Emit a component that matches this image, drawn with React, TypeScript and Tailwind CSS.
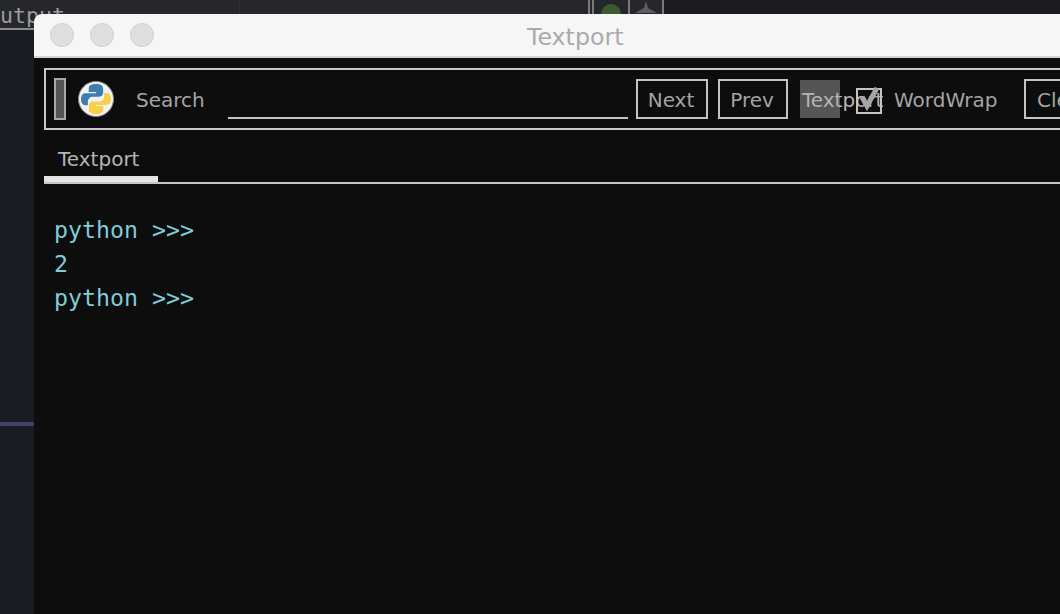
const mono = "font-['DejaVu_Sans_Mono',monospace]";

function PythonLogo() {
  return (
    <div className="w-[36px] h-[36px] rounded-full bg-[#f2f2f2] border border-[#8a8a8a] flex items-center justify-center shrink-0">
      <svg viewBox="0 0 24 24" className="w-[30px] h-[30px]">
        <path
          fill="#3f7cb0"
          d="M11.9 0C6.9 0 6.2 2.2 6.2 3.6v2.8h5.9v.9H3.6C1.7 7.3 0 8.9 0 12c0 3.2 1.4 4.9 3.2 4.9h2.3v-3c0-2 1.7-3.8 3.8-3.8h5.4c1.7 0 3-1.4 3-3.1V3.4C17.7 1.6 16 0 11.9 0z"
        />
        <path
          fill="#f8cf4a"
          d="M12.1 24c5 0 5.7-2.2 5.7-3.6v-2.8h-5.9v-.9h8.5c1.9 0 3.6-1.6 3.6-4.7 0-3.2-1.4-4.9-3.2-4.9h-2.3v3c0 2-1.7 3.8-3.8 3.8H9.3c-1.7 0-3 1.4-3 3.1v3.6c0 1.8 1.7 3.4 5.8 3.4z"
        />
      </svg>
    </div>
  );
}

function ToolButton({ label, width }: { label: string; width: string }) {
  return (
    <div className={`${width} h-[40px] border-2 border-[#c4c4c4] flex items-center justify-center pt-[2px] pr-[2px] shrink-0 text-[20px] text-[#a4a4a4]`}>
      {label}
    </div>
  );
}

function BackgroundEditor() {
  return (
    <div className="absolute inset-0 bg-[#1a1c21]">
      <div className="h-[28px] flex bg-[#25272a]">
        <div className="w-[240px] border-r border-[#2f3134]" />
        <div className="w-[348px]" />
        <div className="w-[2px] bg-[#77797c]" />
        <div className="w-[2px]" />
        <div className="w-[38px] border-x-2 border-[#77797c] flex justify-center">
          <div className="w-[20px] h-[20px] rounded-full bg-[#3c5a30] mt-[4px]" />
        </div>
        <div className="w-[34px] border-r-2 border-[#77797c] flex justify-center">
          <svg viewBox="0 0 24 14" className="w-[24px] h-[14px]">
            <path d="M12 1l2 7 9 5H1l9-5z" fill="#5c5e5e" />
          </svg>
        </div>
        <div className="flex-1 bg-[#1a1c20]" />
      </div>
      <div className={`absolute left-0 top-[2px] h-[27px] leading-[27px] text-[21.6px] text-[#9c9c9c] whitespace-nowrap ${mono}`}>
        utput
      </div>
      <div className="absolute left-0 top-[28px] w-[34px] h-[2px] bg-[#8a8a8a]" />
      <div className="absolute left-0 top-[422px] w-[34px] h-[4px] bg-[#40406e]" />
    </div>
  );
}

export default function App() {
  return (
    <div className="relative w-[1060px] h-[614px] overflow-hidden font-['DejaVu_Sans',sans-serif]">
      <BackgroundEditor />
      <div className="absolute left-[34px] top-[14px] w-[1100px] h-[620px] bg-[#0d0d0d] rounded-t-[8px] overflow-hidden">
        <div className="h-[44px] bg-[#f6f6f6] border-b-2 border-[#d4d4d4] flex items-center relative pl-[16px] gap-[16px]">
          <div className="w-[24px] h-[24px] rounded-full bg-[#dfdfdf] border border-[#d0d0d0]" />
          <div className="w-[24px] h-[24px] rounded-full bg-[#dfdfdf] border border-[#d0d0d0]" />
          <div className="w-[24px] h-[24px] rounded-full bg-[#dfdfdf] border border-[#d0d0d0]" />
          <div className="absolute left-[493px] top-[8px] text-[23.7px] leading-[30px] text-[#aaaaaa]">
            Textport
          </div>
        </div>
        <div className="pt-[10px] pl-[10px]">
          <div className="h-[62px] border-2 border-[#c8c8c8] flex items-center pl-[8px]">
            <div className="w-[12px] h-[42px] bg-[#555555] border-2 border-[#a8a8a8] shrink-0" />
            <div className="ml-[12px]">
              <PythonLogo />
            </div>
            <div className="ml-[22px] w-[92px] pt-[2px] text-[20px] text-[#a4a4a4] shrink-0">Search</div>
            <div className="w-[400px] h-[40px] border-b-2 border-[#c4c4c4] shrink-0" />
            <div className="ml-[8px]">
              <ToolButton label="Next" width="w-[72px]" />
            </div>
            <div className="ml-[10px]">
              <ToolButton label="Prev" width="w-[70px]" />
            </div>
            <div className="relative ml-[12px] w-[40px] h-[38px] bg-[#555555] shrink-0">
              <div className="absolute left-[2px] top-[7px] text-[20px] leading-[26px] text-[#b4b4b4] whitespace-nowrap">Textport</div>
            </div>
            <div className="relative ml-[16px] w-[26px] h-[26px] border-2 border-[#c4c4c4] shrink-0 mt-[4px]">
              <svg viewBox="0 0 26 26" className="absolute left-[-2px] top-[-2px] w-[26px] h-[26px] overflow-visible">
                <path d="M6 9l5 9L21 0" fill="none" stroke="#a6a6a6" strokeWidth="5" />
              </svg>
            </div>
            <div className="ml-[12px] w-[130px] pt-[2px] text-[20px] text-[#a4a4a4] shrink-0">WordWrap</div>
            <div className="h-[40px] w-[72px] border-2 border-[#c4c4c4] text-[20px] text-[#a4a4a4] flex items-center pl-[11px] pt-[2px] shrink-0">
              Clear
            </div>
          </div>
          <div className="mt-[14px] flex flex-col">
            <div className="h-[26px] pl-[14px] text-[20px] leading-[30px] text-[#b4b4b4]">Textport</div>
            <div className="relative mt-[6px] h-[8px]">
              <div className="absolute left-0 top-0 w-[114px] h-[8px] bg-[#e4e4e4]" />
              <div className="absolute left-0 top-[6px] w-full h-[2px] bg-[#c4c4c4]" />
            </div>
          </div>
          <div className={`mt-[29px] pl-[10px] text-[23.25px] leading-[34px] text-[#80ccd8] ${mono}`}>
            <div>python &gt;&gt;&gt;</div>
            <div>2</div>
            <div>python &gt;&gt;&gt;</div>
          </div>
        </div>
      </div>
    </div>
  );
}
